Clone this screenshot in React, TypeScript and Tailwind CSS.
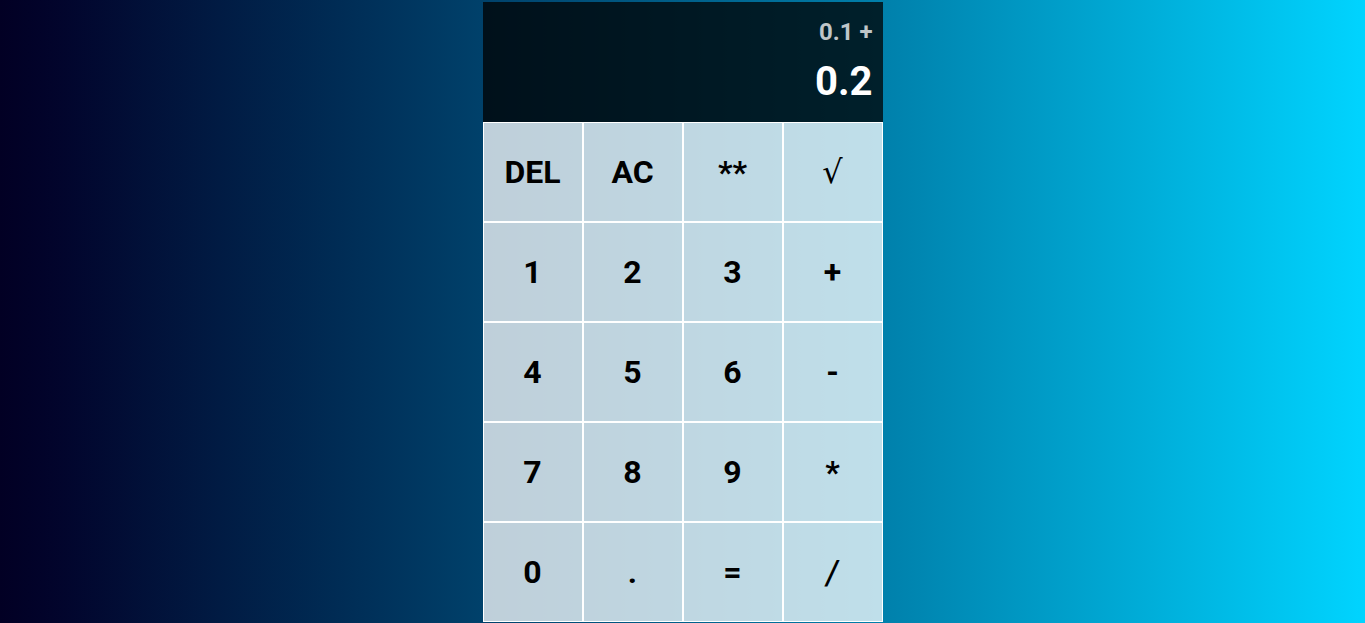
const keys: { label: string; cls?: string }[] = [
  { label: 'DEL' },
  { label: 'AC' },
  { label: '**' },
  { label: '√', cls: 'font-normal font-["DejaVu_Serif",serif]' },
  { label: '1' },
  { label: '2' },
  { label: '3' },
  { label: '+' },
  { label: '4' },
  { label: '5' },
  { label: '6' },
  { label: '-' },
  { label: '7' },
  { label: '8' },
  { label: '9' },
  { label: '*' },
  { label: '0' },
  { label: '.' },
  { label: '=' },
  { label: '/', cls: 'font-normal font-["DejaVu_Sans_Mono",monospace] text-[2.2rem]' },
];

export default function App() {
  return (
    <div className="min-h-screen bg-gradient-to-r from-[#020024] to-[#00d4ff] grid justify-center content-center grid-cols-[repeat(4,100px)] grid-rows-[120px_repeat(5,100px)] font-['Roboto',sans-serif]">
      <div className="col-span-4 bg-black/75 flex flex-col items-end justify-around p-[10px] break-all">
        <div className="text-white/75 text-2xl leading-[normal] font-bold">0.1 +</div>
        <div className="text-white text-[2.5rem] leading-[normal] font-bold">0.2</div>
      </div>
      {keys.map((k) => (
        <button
          key={k.label}
          className={`border border-white bg-white/75 text-black text-[2rem] font-bold ${k.cls ?? ''}`}
        >
          {k.label}
        </button>
      ))}
    </div>
  );
}
